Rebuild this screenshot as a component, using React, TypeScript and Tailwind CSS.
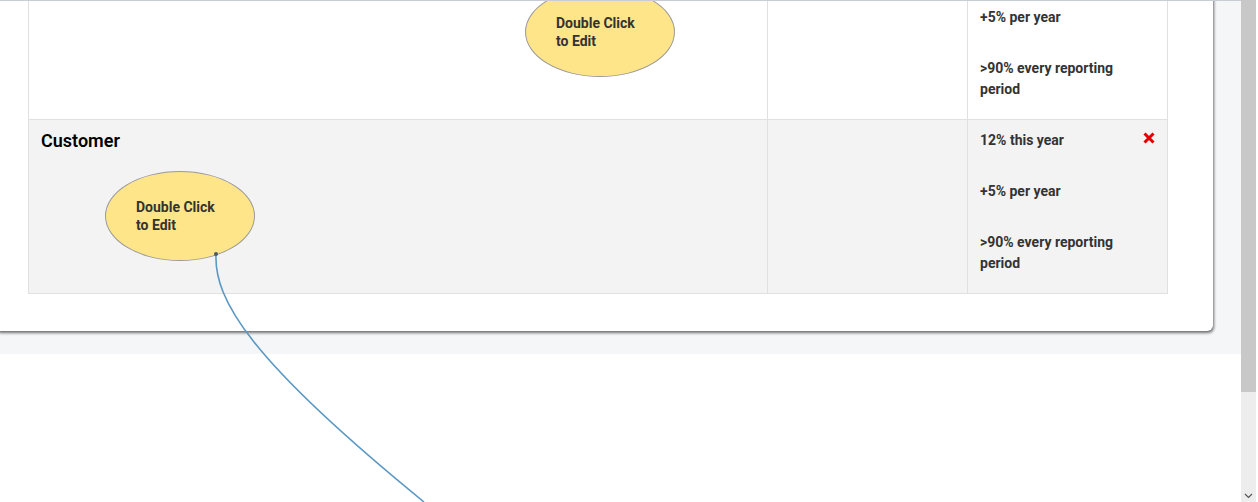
import React from "react";

const Node = ({ className }: { className: string }) => (
  <div
    className={`absolute w-[150px] h-[90px] rounded-[50%] bg-[#fee58a] border border-[#9a9a9a] flex items-center pl-[30px] ${className}`}
  >
    <div className="text-[14px] leading-[18px] font-bold text-[#333]">
      Double Click
      <br />
      to Edit
    </div>
  </div>
);

const Targets = ({ items, showX }: { items: string[]; showX?: boolean }) => (
  <div className="relative w-[200px] border-r border-[#e0e0e0] pl-3 pr-3 pt-[10px] pb-[19px] flex flex-col justify-end gap-[30px] text-[14px] leading-[21px] font-bold text-[#333]">
    {items.map((t) => (
      <div key={t}>{t}</div>
    ))}
    {showX && (
      <svg
        className="absolute top-[12px] right-[12px]"
        width="12"
        height="12"
        viewBox="0 0 12 12"
      >
        <path d="M1.5 1.5 L10.5 10.5 M10.5 1.5 L1.5 10.5" stroke="#e50000" strokeWidth="3" />
      </svg>
    )}
  </div>
);

export default function App() {
  return (
    <div className="relative w-[1258px] h-[502px] overflow-hidden bg-white flex font-['Roboto','Liberation_Sans',sans-serif]">
      <div className="w-[1241px] flex flex-col">
        <div className="h-[354px] bg-[#f5f6f8] border-t border-[#c8cdd5] flex flex-col justify-end overflow-hidden">
          <div className="ml-[-6px] mb-[23px] w-[1219px] bg-white rounded-md shadow-[1px_2px_3px_rgba(0,0,0,0.55)] pl-[34px] pt-4 pb-[37px]">
            <div className="w-[1140px] border-l border-t border-[#e0e0e0]">
              <div className="flex h-[174px] border-b border-[#e0e0e0] bg-white">
                <div className="relative w-[739px] border-r border-[#e0e0e0]">
                  <Node className="left-[496px] top-[41px]" />
                </div>
                <div className="w-[200px] border-r border-[#e0e0e0]" />
                <Targets items={["+5% per year", ">90% every reporting period"]} />
              </div>
              <div className="flex border-b border-[#e0e0e0] bg-[#f3f3f3]">
                <div className="relative w-[739px] border-r border-[#e0e0e0] pl-3 pt-[9px]">
                  <div className="text-[18px] leading-[24px] font-semibold text-black">Customer</div>
                  <Node className="left-[76px] top-[51px]" />
                </div>
                <div className="w-[200px] border-r border-[#e0e0e0]" />
                <Targets
                  items={["12% this year", "+5% per year", ">90% every reporting period"]}
                  showX
                />
              </div>
            </div>
          </div>
        </div>
      </div>
      <div className="w-[15px] h-full bg-[#ededed] flex flex-col justify-between">
        <div className="h-[392px] bg-[#c8c8c8]" />
        <svg width="15" height="8" viewBox="0 0 15 8" className="mb-[2px]">
          <path d="M4 2 L7.5 5.5 L11 2" stroke="#555" strokeWidth="1.2" fill="none" />
        </svg>
      </div>
      <svg
        className="absolute left-0 top-0 pointer-events-none"
        width="1258"
        height="502"
        viewBox="0 0 1258 502"
      >
        <path
          d="M216 254 C 214 300, 250 360, 424 502"
          stroke="#5b98c2"
          strokeWidth="1.6"
          fill="none"
        />
        <circle cx="216" cy="254" r="2" fill="#4a5a6a" />
      </svg>
    </div>
  );
}
